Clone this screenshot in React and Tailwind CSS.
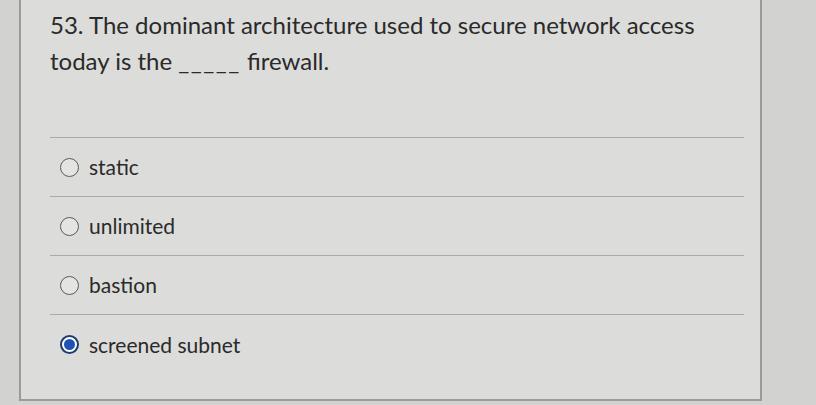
const options = [
  { label: 'static', checked: false },
  { label: 'unlimited', checked: false },
  { label: 'bastion', checked: false },
  { label: 'screened subnet', checked: true },
];

const Radio = ({ checked }) =>
  checked ? (
    <span className="flex h-[19px] w-[19px] shrink-0 items-center justify-center rounded-full border-2 border-[#1d3a72] bg-white">
      <span className="h-[11px] w-[11px] rounded-full bg-[#1f52b4]" />
    </span>
  ) : (
    <span className="h-[19px] w-[19px] shrink-0 rounded-full border-[1.5px] border-[#5a5a5a] bg-[#e4e4e2]" />
  );

export default function App() {
  return (
    <div className="h-[405px] w-[816px] overflow-hidden bg-[#d2d2d0] font-['Lato',sans-serif] text-[#2a2a2a]">
      <div className="ml-[19px] h-[401px] w-[743px] border-b-2 border-l-2 border-r-2 border-[#9a9a98] bg-[#dcdcda] pl-[29px] pr-[16px]">
        <div className="pt-[7px] text-[24px] leading-[36px]">
          <p>53. The dominant architecture used to secure network access</p>
          <p>
            today is the <span className="tracking-[1.5px]">_____</span> firewall.
          </p>
        </div>
        <div className="mt-[58px] border-t border-[#aaaaa8]">
          {options.map((o) => (
            <div key={o.label} className="flex h-[59px] items-center gap-[10px] border-b border-[#aaaaa8] pl-[10px] text-[21px] last:border-b-0">
              <Radio checked={o.checked} />
              <span>{o.label}</span>
            </div>
          ))}
        </div>
      </div>
    </div>
  );
}
